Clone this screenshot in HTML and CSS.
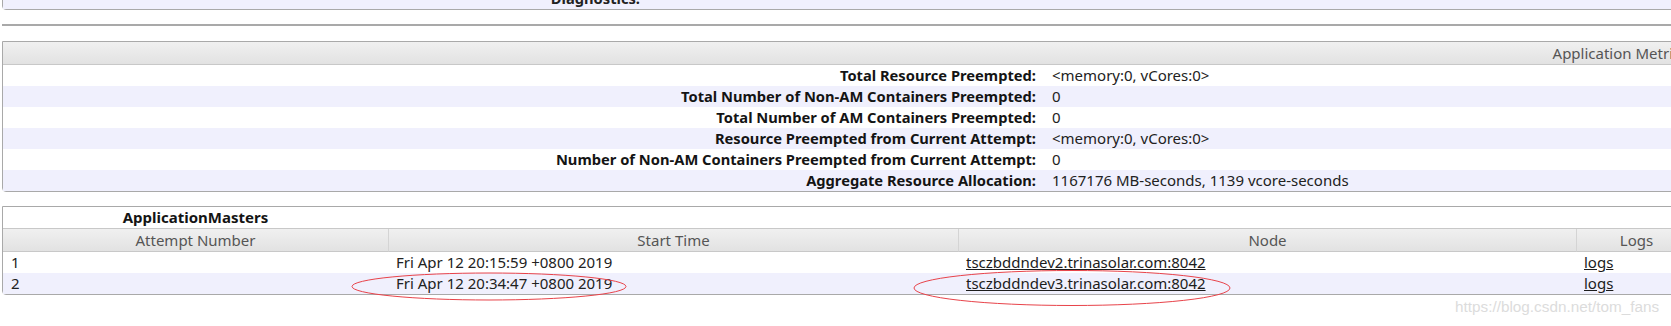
FILE: index.html
```html
<!DOCTYPE html>
<html lang="en">
<head>
    <meta charset="UTF-8">
    <title>Application Attempt</title>
    <link rel="stylesheet" href="styles.css">
</head>
<body>

    <table class="info prev">
        <colgroup><col class="col-prev-label"><col></colgroup>
        <tbody>
            <tr class="odd">
                <th class="prev-label">Diagnostics:</th>
                <td></td>
            </tr>
        </tbody>
    </table>

    <div class="empty-box"></div>

    <table class="info metrics">
        <colgroup><col class="col-label"><col></colgroup>
        <thead>
            <tr><th colspan="2" class="ui-head">Application Metrics</th></tr>
        </thead>
        <tbody>
            <tr><th>Total Resource Preempted:</th><td>&lt;memory:0, vCores:0&gt;</td></tr>
            <tr class="odd"><th>Total Number of Non-AM Containers Preempted:</th><td>0</td></tr>
            <tr><th>Total Number of AM Containers Preempted:</th><td>0</td></tr>
            <tr class="odd"><th>Resource Preempted from Current Attempt:</th><td>&lt;memory:0, vCores:0&gt;</td></tr>
            <tr><th>Number of Non-AM Containers Preempted from Current Attempt:</th><td>0</td></tr>
            <tr class="odd"><th>Aggregate Resource Allocation:</th><td>1167176 MB-seconds, 1139 vcore-seconds</td></tr>
        </tbody>
    </table>

    <table class="info masters">
        <colgroup>
            <col class="col-num">
            <col class="col-time">
            <col class="col-node">
            <col class="col-logs">
        </colgroup>
        <thead>
            <tr class="caption"><th>ApplicationMasters</th><th></th><th></th><th></th></tr>
            <tr class="ui-row">
                <th>Attempt Number</th>
                <th>Start Time</th>
                <th>Node</th>
                <th>Logs</th>
            </tr>
        </thead>
        <tbody>
            <tr>
                <td>1</td>
                <td>Fri Apr 12 20:15:59 +0800 2019</td>
                <td><a href="#">tsczbddndev2.trinasolar.com:8042</a></td>
                <td><a href="#">logs</a></td>
            </tr>
            <tr class="odd">
                <td>2</td>
                <td>Fri Apr 12 20:34:47 +0800 2019</td>
                <td><a href="#">tsczbddndev3.trinasolar.com:8042</a></td>
                <td><a href="#">logs</a></td>
            </tr>
        </tbody>
    </table>

    <svg class="marks" width="1671" height="326" viewBox="0 0 1671 326">
        <ellipse cx="489" cy="286.5" rx="137" ry="13.5" fill="none" stroke="#e8434a" stroke-width="1"/>
        <ellipse cx="1072" cy="288" rx="158" ry="17.5" fill="none" stroke="#e8434a" stroke-width="1"/>
    </svg>

    <div class="watermark">https://blog.csdn.net/tom_fans</div>

</body>
</html>
```

FILE: styles.css
```css
body {
    margin: 0;
    padding: 0 0 0 2px;
    background-color: #fff;
    font-family: "Noto Sans", "Open Sans", sans-serif;
    font-size: 15px;
    color: #222;
    overflow: hidden;
    position: relative;
    width: 1669px;
    height: 326px;
}

table.info {
    border-collapse: separate;
    border-spacing: 0;
    table-layout: fixed;
    border: 1px solid #a9a9a9;
    border-radius: 0 0 0 4px;
}

table.info th,
table.info td {
    height: 21px;
    padding: 0 4px;
    white-space: nowrap;
    overflow: hidden;
    line-height: 21px;
}

tr.odd th,
tr.odd td {
    background-color: #f0f0fd;
}

/* previous block, cut at the top */
.prev {
    width: 3240px;
    margin-top: -13px;
    border-top: none;
    background-color: #f0f0fd;
}

.col-prev-label { width: 641px; }

.prev .prev-label {
    text-align: right;
    font-weight: bold;
    font-size: 14.7px;
}

.empty-box {
    width: 3240px;
    margin-top: 14px;
    border-top: 1px solid #a9a9a9;
    border-bottom: 1px solid #a9a9a9;
}

/* metrics */
.metrics {
    width: 3236px;
    margin-top: 15px;
}

.col-label { width: 1039px; }

.ui-head,
.ui-row th {
    background: linear-gradient(#f0f0f0, #e2e2e2);
    color: #555;
    font-weight: normal;
    text-align: center;
    border-bottom: 1px solid #c8c8c8;
    height: 22px !important;
    line-height: 22px !important;
}

.metrics tbody th {
    text-align: right;
    font-weight: bold;
    font-size: 14.7px;
    color: #141414;
    padding-right: 6px;
}

.metrics tbody td {
    padding-left: 10px;
}

/* application masters */
.masters {
    width: 1695px;
    margin-top: 14px;
}

.masters .caption th {
    font-weight: bold;
    text-align: center;
    color: #141414;
    border-bottom: 1px solid #c8c8c8;
}

.ui-row th {
    border-left: 1px solid #d4d4d4;
}

.ui-row th:first-child {
    border-left: none;
}

.col-num { width: 385px; }
.col-time { width: 570px; }
.col-node { width: 618px; }
.col-logs { width: 120px; }

.masters tbody td {
    padding-left: 8px;
}

.masters a {
    color: #1c1c1c;
    text-decoration: underline;
}

.marks {
    position: absolute;
    left: 0;
    top: 0;
    pointer-events: none;
}

.watermark {
    position: absolute;
    left: 1455px;
    top: 298px;
    font-family: "Liberation Sans", Arial, sans-serif;
    font-size: 15.3px;
    color: #dcdcdc;
}
```
